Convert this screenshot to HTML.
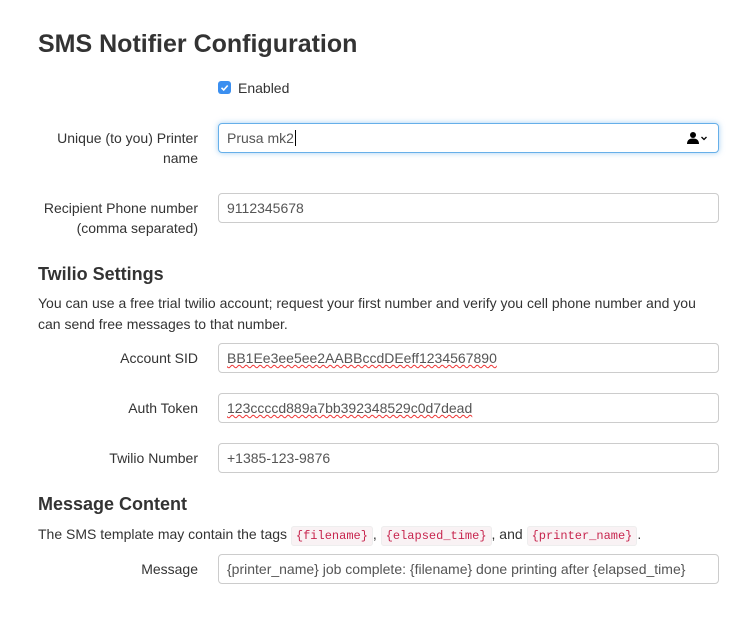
<!DOCTYPE html><html><head><style>
body{margin:0;width:740px;height:633px;background:#fff;font-family:"Liberation Sans",sans-serif;font-size:14px;color:#333;position:relative;overflow:hidden}
.a{position:absolute}
.lbl{position:absolute;right:542px;text-align:right;line-height:20px}
.inp{position:absolute;left:218px;width:499px;height:28px;border:1px solid #ccc;border-radius:4px;line-height:28px;padding-left:8px;box-sizing:content-box;width:491px;color:#555}
h1{position:absolute;left:38px;top:30px;margin:0;font-size:25px;font-weight:bold;color:#333}
h3{position:absolute;left:38px;margin:0;font-size:18px;font-weight:bold;color:#333}
code{font-family:"Liberation Mono",monospace;font-size:12px;color:#c7254e;background:#f9f2f4;border:1px solid #eee;border-radius:3px;padding:2px 4px}
.sq{text-decoration:underline wavy #e33;text-decoration-thickness:1px}
</style></head><body>
<h1>SMS Notifier Configuration</h1>
<div class="a" style="left:218px;top:81px;width:13px;height:13px;background:#3b8ff0;border-radius:3px"><svg width="13" height="13"><path d="M3.5 6.8l2.2 2.2 4-4.5" stroke="#fff" stroke-width="1.6" fill="none"/></svg></div>
<div class="a" style="left:238px;top:79px;line-height:18px">Enabled</div>
<div class="lbl" style="top:128px">Unique (to you) Printer<br>name</div>
<div class="inp" style="top:123px;border-color:#66afe9;box-shadow:0 0 6px rgba(102,175,233,.6)">Prusa mk2<span style="border-left:1px solid #000;margin-left:1px"></span>
<svg class="a" style="left:468px;top:7px" width="22" height="14"><circle cx="6" cy="4" r="3" fill="#000"/><path d="M0 13c0-4 2.5-5.5 6-5.5s6 1.5 6 5.5z" fill="#000"/><path d="M14.5 6l2.5 2.5 2.5-2.5" stroke="#000" stroke-width="1.3" fill="none"/></svg></div>
<div class="lbl" style="top:198px">Recipient Phone number<br>(comma separated)</div>
<div class="inp" style="top:193px">9112345678</div>
<h3 style="top:264px">Twilio Settings</h3>
<div class="a" style="left:38px;top:293px;line-height:21px;width:680px">You can use a free trial twilio account; request your first number and verify you cell phone number and you can send free messages to that number.</div>
<div class="lbl" style="top:348px">Account SID</div>
<div class="inp" style="top:343px"><span class="sq">BB1Ee3ee5ee2AABBccdDEeff1234567890</span></div>
<div class="lbl" style="top:398px">Auth Token</div>
<div class="inp" style="top:393px"><span class="sq">123ccccd889a7bb392348529c0d7dead</span></div>
<div class="lbl" style="top:448px">Twilio Number</div>
<div class="inp" style="top:443px">+1385-123-9876</div>
<h3 style="top:494px">Message Content</h3>
<div class="a" style="left:38px;top:523px;line-height:22px">The SMS template may contain the tags <code>{filename}</code>, <code>{elapsed_time}</code>, and <code>{printer_name}</code>.</div>
<div class="lbl" style="top:559px">Message</div>
<div class="inp" style="top:554px">{printer_name} job complete: {filename} done printing after {elapsed_time}</div>
</body></html>
